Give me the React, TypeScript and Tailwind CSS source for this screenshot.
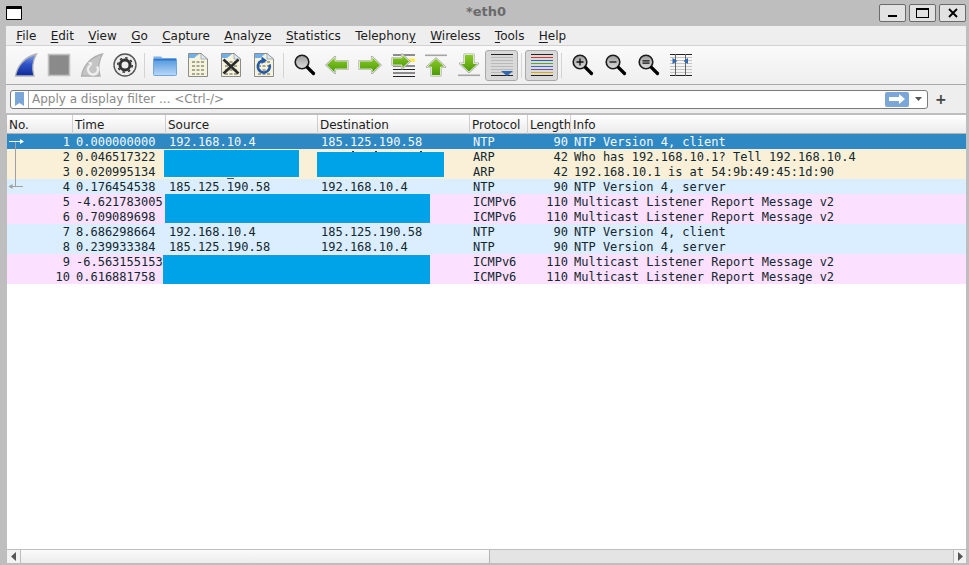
const packets = [
  { no: 1, time: '0.000000000', src: '192.168.10.4', dst: '185.125.190.58', proto: 'NTP', len: 90, info: 'NTP Version 4, client', color: 'bg-[#2e88c4] text-[#f4f8fb]' },
  { no: 2, time: '0.046517322', src: '', dst: '', proto: 'ARP', len: 42, info: 'Who has 192.168.10.1? Tell 192.168.10.4', color: 'bg-[#faf0d7] text-[#12272e]' },
  { no: 3, time: '0.020995134', src: '', dst: '', proto: 'ARP', len: 42, info: '192.168.10.1 is at 54:9b:49:45:1d:90', color: 'bg-[#faf0d7] text-[#12272e]' },
  { no: 4, time: '0.176454538', src: '185.125.190.58', dst: '192.168.10.4', proto: 'NTP', len: 90, info: 'NTP Version 4, server', color: 'bg-[#daeeff] text-[#12272e]' },
  { no: 5, time: '-4.621783005', src: '', dst: '', proto: 'ICMPv6', len: 110, info: 'Multicast Listener Report Message v2', color: 'bg-[#fce0ff] text-[#12272e]' },
  { no: 6, time: '0.709089698', src: '', dst: '', proto: 'ICMPv6', len: 110, info: 'Multicast Listener Report Message v2', color: 'bg-[#fce0ff] text-[#12272e]' },
  { no: 7, time: '8.686298664', src: '192.168.10.4', dst: '185.125.190.58', proto: 'NTP', len: 90, info: 'NTP Version 4, client', color: 'bg-[#daeeff] text-[#12272e]' },
  { no: 8, time: '0.239933384', src: '185.125.190.58', dst: '192.168.10.4', proto: 'NTP', len: 90, info: 'NTP Version 4, server', color: 'bg-[#daeeff] text-[#12272e]' },
  { no: 9, time: '-6.563155153', src: '', dst: '', proto: 'ICMPv6', len: 110, info: 'Multicast Listener Report Message v2', color: 'bg-[#fce0ff] text-[#12272e]' },
  { no: 10, time: '0.616881758', src: '', dst: '', proto: 'ICMPv6', len: 110, info: 'Multicast Listener Report Message v2', color: 'bg-[#fce0ff] text-[#12272e]' },
]

const menus = [
  ['', 'F', 'ile'], ['', 'E', 'dit'], ['', 'V', 'iew'], ['', 'G', 'o'], ['', 'C', 'apture'], ['', 'A', 'nalyze'],
  ['', 'S', 'tatistics'], ['Telephon', 'y', ''], ['', 'W', 'ireless'], ['', 'T', 'ools'], ['', 'H', 'elp'],
]

const columns = 'grid grid-cols-[65px_93px_152px_152px_58px_43px_1fr]'

const Ico = ({ children }: { children: React.ReactNode }) => (
  <svg width="24" height="24" viewBox="0 0 24 24" fill="none">{children}</svg>
)

const Btn = ({ children, checked }: { children: React.ReactNode; checked?: boolean }) => (
  <div className={checked
    ? 'flex h-[31px] w-[33px] items-center justify-center rounded-[3px] border border-[#a9a9a9] bg-[#d9d9d9]'
    : 'flex h-[31px] w-[33px] items-center justify-center'}>
    {children}
  </div>
)

const Sep = () => (
  <div className="flex h-[31px] w-[7px] justify-center py-[3px]"><div className="w-px bg-[#d4d4d4]" /></div>
)

const Fin = () => (
  <Ico>
    <defs>
      <linearGradient id="fin" x1="0" y1="0" x2="0" y2="1">
        <stop offset="0" stopColor="#8fa8e8" />
        <stop offset="0.45" stopColor="#2f55c8" />
        <stop offset="1" stopColor="#0e2a98" />
      </linearGradient>
    </defs>
    <path d="M1.500 23C3 13 11 3.500 22.500 1C18.500 8 18 16 20 23Z" fill="url(#fin)" stroke="#b5b5b5" strokeWidth="1.300" />
  </Ico>
)

const Stop = () => (
  <Ico>
    <rect x="1.500" y="1.500" width="21" height="21" fill="#8a8a8a" stroke="#c2c2c2" strokeWidth="1.600" />
  </Ico>
)

const Restart = () => (
  <Ico>
    <path d="M1.500 23C3 13 11 3.500 22.500 1C18.500 8 18 16 20 23Z" fill="#c4c4c4" stroke="#b0b0b0" strokeWidth="1.300" />
    <path d="M17 13.500a5 5 0 1 1-7-1" stroke="#efefef" strokeWidth="2.400" />
    <path d="M8 9l4.500 0.500-1.500 4z" fill="#efefef" />
  </Ico>
)

const Options = () => (
  <Ico>
    <circle cx="12" cy="12" r="11" fill="#eeeeee" stroke="#555555" strokeWidth="1.400" />
    <circle cx="12" cy="12" r="5" stroke="#333333" strokeWidth="3" />
    <circle cx="12" cy="12" r="7.200" stroke="#333333" strokeWidth="1.600" strokeDasharray="2.500 3.150" />
  </Ico>
)

const Folder = () => (
  <Ico>
    <defs>
      <linearGradient id="folder" x1="0" y1="0" x2="0" y2="1">
        <stop offset="0" stopColor="#4e94dc" />
        <stop offset="1" stopColor="#b9d8f8" />
      </linearGradient>
    </defs>
    <path d="M0.500 5.500V3.500H8L10 5.500Z" fill="#7fb0e6" />
    <rect x="0.500" y="5.500" width="23" height="17" rx="1" fill="url(#folder)" stroke="#6fa5e0" />
    <rect x="1" y="6" width="22" height="1.500" fill="#2f78c8" />
  </Ico>
)

const DocBase = ({ children }: { children?: React.ReactNode }) => (
  <>
    <path d="M2.500 0.500H15L21.500 6V23.500H2.500Z" fill="#f6f3dc" stroke="#8c8c8c" />
    <path d="M3 1H13L8 5H3Z" fill="#6fb0e8" />
    <path d="M15 0.500V6H21.500Z" fill="#d8ebfa" stroke="#8c8c8c" strokeWidth="0.600" />
    {[8, 12, 16, 20].map((y) => (
      <g key={y}>
        <rect x="6" y={y} width="3" height="2" fill="#a8a890" />
        <rect x="10.500" y={y} width="3" height="2" fill="#a8a890" />
        <rect x="15" y={y} width="3" height="2" fill="#a8a890" />
      </g>
    ))}
    {children}
  </>
)

const DocFile = () => <Ico><DocBase /></Ico>

const DocClose = () => (
  <Ico>
    <DocBase>
      <path d="M4.500 6.500L19.500 20.500M19.500 6.500L4.500 20.500" stroke="#2b2b2b" strokeWidth="2.600" />
    </DocBase>
  </Ico>
)

const DocReload = () => (
  <Ico>
    <DocBase>
      <path d="M11 7.500a6 6 0 1 0 6.500 4" stroke="#2458a8" strokeWidth="2.600" />
      <path d="M9.500 3.500l5.500 4-5.500 3.500z" fill="#2458a8" />
    </DocBase>
  </Ico>
)

const Glass = ({ children }: { children?: React.ReactNode }) => (
  <Ico>
    <defs>
      <linearGradient id="glass" x1="0" y1="0" x2="0" y2="1">
        <stop offset="0" stopColor="#9c9c9c" />
        <stop offset="1" stopColor="#dedede" />
      </linearGradient>
    </defs>
    <circle cx="10" cy="9" r="6.800" fill="url(#glass)" stroke="#1c1c1c" strokeWidth="1.600" />
    <path d="M15.500 14.500L21.500 20.500" stroke="#000000" strokeWidth="3.200" strokeLinecap="round" />
    {children}
  </Ico>
)

const arrow = {
  left: 'M1.500 12L10 4V8H22.500V16H10V20Z',
  right: 'M22.500 12L14 4V8H1.500V16H14V20Z',
}

const GreenDefs = () => (
  <defs>
    <linearGradient id="green" x1="0" y1="0" x2="0" y2="1">
      <stop offset="0" stopColor="#8ccb2a" />
      <stop offset="1" stopColor="#4b9a06" />
    </linearGradient>
  </defs>
)

// gray rim, pale inner rim, then the green fill
const GreenArrow = ({ d }: { d: string }) => (
  <>
    <path d={d} fill="#ffffff" stroke="#a8a8a8" strokeWidth="2.200" strokeLinejoin="round" />
    <path d={d} fill="url(#green)" stroke="#eef6df" strokeWidth="0.800" />
  </>
)

const Back = () => (
  <Ico><GreenDefs /><GreenArrow d={arrow.left} /></Ico>
)

const Forward = () => (
  <Ico><GreenDefs /><GreenArrow d={arrow.right} /></Ico>
)

const Jump = () => (
  <Ico>
    <GreenDefs />
    {[2, 13, 16.500, 20, 23.500].map((y) => (
      <rect key={y} x="2" y={y - 0.500} width="22" height="1" fill="#222222" />
    ))}
    <rect x="18" y="5.500" width="6" height="3.500" fill="#ffe94d" />
    <GreenArrow d="M18.500 8.500L11 1.500V5H1.500V12H11V15.500Z" />
  </Ico>
)

const First = () => (
  <Ico>
    <GreenDefs />
    <rect x="1" y="1.500" width="22" height="1.600" fill="#a5a5a5" />
    <GreenArrow d="M12 5.500L21 14H16.500V22.500H7.500V14H3Z" />
  </Ico>
)

const Last = () => (
  <Ico>
    <GreenDefs />
    <rect x="1" y="21.500" width="22" height="1.600" fill="#a5a5a5" />
    <GreenArrow d="M12 19L21 10.500H16.500V1.500H7.500V10.500H3Z" />
  </Ico>
)

const AutoScroll = () => (
  <Ico>
    {[4, 7, 10, 13, 16, 19].map((y) => (
      <rect key={y} x="1" y={y} width="22" height="1" fill="#b9b9b9" />
    ))}
    <rect x="1" y="1" width="22" height="1" fill="#222222" />
    <rect x="1" y="22" width="22" height="1" fill="#222222" />
    <path d="M11 18H23L17 23Z" fill="#2f68ae" />
  </Ico>
)

const Colorize = () => (
  <Ico>
    {[
      ['#222222', 1], ['#d8352c', 4], ['#2f62b8', 7], ['#5aa632', 10], ['#3a6fc0', 13],
      ['#7a4f9e', 16], ['#d8a818', 19], ['#222222', 22],
    ].map(([c, y]) => (
      <rect key={String(y)} x="1" y={Number(y)} width="22" height="1" fill={String(c)} />
    ))}
  </Ico>
)

const Resize = () => (
  <Ico>
    {[4, 7, 10, 13, 16, 19].map((y) => (
      <rect key={y} x="1" y={y} width="22" height="1" fill="#c4c4c4" />
    ))}
    <rect x="1" y="1" width="22" height="1" fill="#222222" />
    <rect x="1" y="22" width="22" height="1" fill="#222222" />
    <rect x="6" y="1" width="1" height="22" fill="#666666" />
    <rect x="16" y="1" width="1" height="22" fill="#666666" />
    <path d="M3.500 5L8.500 8L3.500 11Z" fill="#2f68ae" />
    <path d="M19 5L14.500 8L19 11Z" fill="#2f68ae" />
  </Ico>
)

const WinBtn = ({ children }: { children: React.ReactNode }) => (
  <div className="flex h-[18px] w-[27px] items-center justify-center rounded-[2px] border border-[#6b6b6b] bg-[#e2e2e2]">
    {children}
  </div>
)

const Tri = ({ dir }: { dir: 'l' | 'r' }) => (
  <svg width="5" height="9" viewBox="0 0 5 9">
    <path d={dir === 'l' ? 'M5 0V9L0 4.500Z' : 'M0 0V9L5 4.500Z'} fill="#555555" />
  </svg>
)

const App = () => {
  const heads = ['No.', 'Time', 'Source', 'Destination', 'Protocol', 'Length', 'Info']

  return (
    <div className="flex h-[565px] w-[969px] flex-col overflow-hidden bg-[#bebebe] font-['DejaVu_Sans',sans-serif] text-xs text-[#1c1c1c]">
      <div className="relative flex h-[26px] shrink-0 items-center justify-between pl-[6px] pr-[3px]">
        <div className="h-[14px] w-[16px] rounded-[1px] border border-t-[3px] border-black bg-white" />
        <div className="absolute inset-x-0 top-[3px] pl-[3px] text-center text-[13px] font-bold leading-[18px] text-[#6a6a6a]">*eth0</div>
        <div className="mb-[1px] flex gap-[3px]">
          <WinBtn><div className="mt-[7px] h-[2px] w-[9px] bg-black" /></WinBtn>
          <WinBtn><div className="h-[10px] w-[13px] border border-t-2 border-black" /></WinBtn>
          <WinBtn>
            <svg width="10" height="10" viewBox="0 0 10 10"><path d="M1 1L9 9M9 1L1 9" stroke="#000" strokeWidth="1.800" /></svg>
          </WinBtn>
        </div>
      </div>

      <div className="ml-[6px] mr-[3px] flex min-h-0 flex-1 flex-col">
        <div className="flex h-[20px] shrink-0 items-center border-b border-[#d2d2d2] bg-[#eeeeee] pl-[3px]">
          {menus.map(([pre, key, post]) => (
            <span key={key + post} className="px-[7.2px] leading-[18px] text-[#1c1c1c]">
              {pre}<span className="underline underline-offset-2">{key}</span>{post}
            </span>
          ))}
        </div>

        <div className="flex h-[39px] shrink-0 items-center border-b border-[#a9a9a9] bg-gradient-to-b from-[#fafafa] to-[#efefef] pl-[3px]">
          <Btn><Fin /></Btn>
          <Btn><Stop /></Btn>
          <Btn><Restart /></Btn>
          <Btn><Options /></Btn>
          <Sep />
          <Btn><Folder /></Btn>
          <Btn><DocFile /></Btn>
          <Btn><DocClose /></Btn>
          <Btn><DocReload /></Btn>
          <Sep />
          <Btn><Glass /></Btn>
          <Btn><Back /></Btn>
          <Btn><Forward /></Btn>
          <Btn><Jump /></Btn>
          <Btn><First /></Btn>
          <Btn><Last /></Btn>
          <Btn checked><AutoScroll /></Btn>
          <Sep />
          <Btn checked><Colorize /></Btn>
          <Sep />
          <Btn>
            <Glass>
              <path d="M6.500 9H13.500M10 5.500V12.500" stroke="#111" strokeWidth="1.300" />
            </Glass>
          </Btn>
          <Btn>
            <Glass>
              <path d="M6.500 9H13.500" stroke="#111" strokeWidth="1.300" />
            </Glass>
          </Btn>
          <Btn>
            <Glass>
              <path d="M6.500 7.800H13.500M6.500 10.200H13.500" stroke="#111" strokeWidth="1.200" />
            </Glass>
          </Btn>
          <Btn><Resize /></Btn>
        </div>

        <div className="flex h-[28px] shrink-0 items-center bg-[#eeeeee] pl-[4px]">
          <div className="flex h-[19px] w-[918px] items-center rounded-[3px] border border-[#7a7a7a] bg-white">
            <div className="flex h-full w-[18px] items-center justify-center border-r border-[#a8a8a8]">
              <svg width="9" height="14" viewBox="0 0 9 14"><path d="M0 0H9V14L4.500 11L0 14Z" fill="#7ba6d8" /></svg>
            </div>
            <span className="flex-1 pl-[3px] leading-[19px] text-[#8a8a8a]">{'Apply a display filter ... <Ctrl-/>'}</span>
            <div className="flex h-[15px] w-[24px] items-center justify-center rounded-[2px] bg-[#7ba6d8]">
              <svg width="16" height="10" viewBox="0 0 16 10"><path d="M0 3H10V0L16 5L10 10V7H0Z" fill="#ffffff" /></svg>
            </div>
            <div className="flex w-[18px] justify-center">
              <svg width="7" height="4" viewBox="0 0 7 4"><path d="M0 0H7L3.500 4Z" fill="#555555" /></svg>
            </div>
          </div>
          <div className="ml-[7px] text-[14px] font-bold leading-none text-[#444444]">+</div>
        </div>

        <div className="mt-[2px] ml-px flex min-h-0 flex-1 flex-col bg-white">
          <div className={`${columns} h-[19px] shrink-0 border-b border-[#b4b4b4] bg-gradient-to-b from-white to-[#ebebeb]`}>
            {heads.map((h, i) => (
              <div
                key={h}
                className={i === 0
                  ? 'pl-[2px] leading-[20px]'
                  : 'overflow-hidden whitespace-nowrap border-l border-[#cfcfcf] pl-[2px] leading-[20px]'}
              >
                {h}
              </div>
            ))}
          </div>

          <div className="relative min-h-0 flex-1 font-['DejaVu_Sans_Mono',monospace]">
            {packets.map((p) => (
              <div key={p.no} className={`${columns} h-[15px] leading-[17px] ${p.color}`}>
                <div className="pr-[2px] text-right">{p.no}</div>
                <div className="overflow-hidden whitespace-nowrap pl-[4px]">{p.time}</div>
                <div className="pl-[4px]">{p.src}</div>
                <div className="pl-[4px]">{p.dst}</div>
                <div className="pl-[4px]">{p.proto}</div>
                <div className="pr-[2px] text-right">{p.len}</div>
                <div className="pl-[4px]">{p.info}</div>
              </div>
            ))}

            <svg className="absolute left-[1px] top-0" width="18" height="60" viewBox="0 0 18 60" fill="none">
              <path d="M1 7.500H15" stroke="#ffffff" />
              <path d="M12 5L16 7.500L12 10Z" fill="#ffffff" />
              <path d="M7.500 8V52" stroke="#a0a0a0" />
              <path d="M3 52.500H15" stroke="#a0a0a0" />
              <path d="M4.500 50L0.500 52.500L4.500 55Z" fill="#a0a0a0" />
            </svg>

            <div className="absolute left-[157px] top-[16px] h-[27px] w-[135px] bg-[#00a2e8]" />
            <div className="absolute left-[310px] top-[18px] h-[25px] w-[127px] bg-[#00a2e8]" />
            <div className="absolute left-[220px] top-[44px] h-px w-[7px] bg-[#555555]" />
            <div className="absolute left-[345px] top-[17px] h-px w-[2px] bg-[#333333]" />
            <div className="absolute left-[368px] top-[17px] h-px w-[2px] bg-[#333333]" />
            <div className="absolute left-[413px] top-[17px] h-px w-[2px] bg-[#333333]" />
            <div className="absolute left-[158px] top-[60px] h-[29px] w-[265px] bg-[#00a2e8]" />
            <div className="absolute left-[156px] top-[121px] h-[29px] w-[267px] bg-[#00a2e8]" />
          </div>

          <div className="flex h-[14px] shrink-0 border-t border-[#bdbdbd] bg-[#e4e4e4]">
            <div className="flex w-[14px] items-center justify-center border-r border-[#bdbdbd] bg-[#f2f2f2]"><Tri dir="l" /></div>
            <div className="w-[469px] border-r border-[#b4b4b4] bg-gradient-to-b from-[#fbfbfb] to-[#ececec]" />
            <div className="flex-1" />
            <div className="flex w-[13px] items-center justify-center border-l border-[#bdbdbd] bg-[#f2f2f2]"><Tri dir="r" /></div>
          </div>
        </div>
        <div className="h-[2px] shrink-0" />
      </div>
    </div>
  )
}

export default App
